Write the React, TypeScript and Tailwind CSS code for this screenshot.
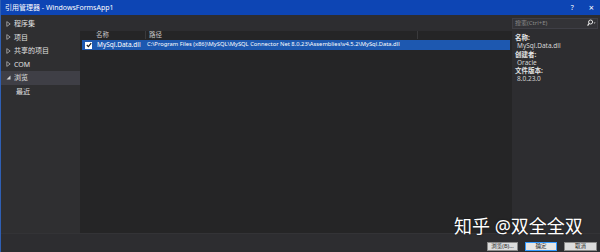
import React from 'react';

const navItems = [
  { label: '程序集', arrow: 'closed' },
  { label: '项目', arrow: 'closed' },
  { label: '共享的项目', arrow: 'closed' },
  { label: 'COM', arrow: 'closed' },
  { label: '浏览', arrow: 'open', active: true },
  { label: '最近', arrow: 'none', indent: true },
];

function Arrow({ kind }: { kind: string }) {
  if (kind === 'none') return <span className="w-[5px]" />;
  if (kind === 'open')
    return (
      <svg width="5" height="5" viewBox="0 0 5 5" className="shrink-0">
        <path d="M4.5 0.5 L4.5 4.5 L0.5 4.5 Z" fill="#d0d0d0" />
      </svg>
    );
  return (
    <svg width="5" height="6" viewBox="0 0 5 6" className="shrink-0">
      <path d="M0.8 0.6 L4.2 3 L0.8 5.4 Z" fill="none" stroke="#b0b0b0" strokeWidth="0.8" />
    </svg>
  );
}

export default function App() {
  const font = { fontFamily: '"Noto Sans", "Noto Sans CJK SC", sans-serif' };
  return (
    <div
      style={font}
      className="relative flex h-[252px] w-[600px] flex-col overflow-hidden border-l border-[#2f5fb3] bg-[#2d2d30] text-[#f1f1f1]"
    >
      {/* Title bar */}
      <div className="flex h-[15px] shrink-0 items-center bg-[#0d45b4] pl-[4px] pr-[6px] text-[7px] leading-none text-white">
        <span>引用管理器 - WindowsFormsApp1</span>
        <span className="ml-auto mr-[15px] text-[7px]">?</span>
        <span className="text-[9px]">×</span>
      </div>

      <div className="flex min-h-0 flex-1">
        {/* Left nav */}
        <div className="flex w-[79px] shrink-0 flex-col bg-[#2f2f31] pt-[2px] text-[7px] leading-none text-[#e0e0e0]">
          {navItems.map((it) => (
            <div
              key={it.label}
              className={`flex h-[13.5px] items-center gap-[3px] ${it.indent ? 'pl-[15px]' : 'pl-[5px]'} ${it.active ? 'bg-[#3f3f46]' : ''}`}
            >
              {!it.indent && <Arrow kind={it.arrow} />}
              <span>{it.label}</span>
            </div>
          ))}
        </div>

        {/* Main */}
        <div className="flex min-w-0 flex-1 flex-col">
          <div className="flex h-[16px] shrink-0 items-center justify-end pr-[2px]">
            <div className="flex h-[11px] w-[86px] items-center border border-[#3f3f46] bg-[#333337] pl-[2px] text-[6px] text-[#8a8a8a]">
              <span>搜索(Ctrl+E)</span>
              <svg width="9" height="8" viewBox="0 0 9 8" className="ml-auto mr-[1px]">
                <circle cx="3.6" cy="3" r="2" fill="none" stroke="#e8e8e8" strokeWidth="1" />
                <path d="M2.2 4.4 L0.6 6.6" stroke="#e8e8e8" strokeWidth="1.2" />
                <path d="M6.6 3.6 L8.6 3.6 L7.6 4.8 Z" fill="#d0d0d0" />
              </svg>
            </div>
          </div>

          <div className="flex min-h-0 flex-1">
            {/* List */}
            <div className="flex min-w-0 flex-1 flex-col bg-[#252526] text-[6.5px] leading-none">
              <div className="flex h-[8px] items-center text-[#c8c8c8]">
                <div className="w-[12px] shrink-0" />
                <div className="flex h-full w-[54px] items-center border-r border-[#3a3a3c] pl-[4px]">名称</div>
                <div className="flex h-full w-[272px] items-center border-r border-[#3a3a3c] pl-[3px]">路径</div>
              </div>
              <div className="mx-[2px] mt-[1px] flex h-[10px] items-center bg-[#1d58b0] text-white">
                <div className="ml-[3px] flex h-[7px] w-[7px] items-center justify-center bg-white">
                  <svg width="6" height="6" viewBox="0 0 6 6">
                    <path d="M0.8 3 L2.4 4.6 L5.2 1.2" fill="none" stroke="#1e1e1e" strokeWidth="1.2" />
                  </svg>
                </div>
                <span className="ml-[5px] w-[50px]">MySql.Data.dll</span>
                <span className="whitespace-nowrap text-[5.8px]">
                  C:\Program Files (x86)\MySQL\MySQL Connector Net 8.0.23\Assemblies\v4.5.2\MySql.Data.dll
                </span>
              </div>
            </div>

            {/* Details */}
            <div className="flex w-[88px] shrink-0 flex-col pl-[3px] pt-[3px] text-[6.5px] leading-[8.3px] text-[#e6e6e6]">
              <span className="font-bold">名称:</span>
              <span className="pl-[2px] text-[#d6d6d6]">MySql.Data.dll</span>
              <span className="font-bold">创建者:</span>
              <span className="pl-[2px] text-[#d6d6d6]">Oracle</span>
              <span className="font-bold">文件版本:</span>
              <span className="pl-[2px] text-[#d6d6d6]">8.0.23.0</span>
            </div>
          </div>
        </div>
      </div>

      {/* Bottom buttons */}
      <div className="flex h-[19px] shrink-0 items-end justify-end gap-[7px] border-t border-[#333336] bg-[#2d2d30] pb-[1px] pr-[3px] text-[5.5px] leading-none text-[#1e1e1e]">
        <div className="flex h-[9px] w-[31px] items-center justify-center border border-[#8a8a8a] bg-[#dcdcdc]">浏览(B)...</div>
        <div className="flex h-[9px] w-[32px] items-center justify-center border border-[#3399ff] bg-[#e6e6e6]">确定</div>
        <div className="flex h-[9px] w-[33px] items-center justify-center border border-[#8a8a8a] bg-[#dcdcdc]">取消</div>
      </div>

      {/* Watermark */}
      <div className="absolute left-[453px] top-[217px] whitespace-nowrap text-[18px] leading-none text-white [text-shadow:0_0_2px_rgba(0,0,0,0.6)]">
        知乎 @双全全双
      </div>
    </div>
  );
}
